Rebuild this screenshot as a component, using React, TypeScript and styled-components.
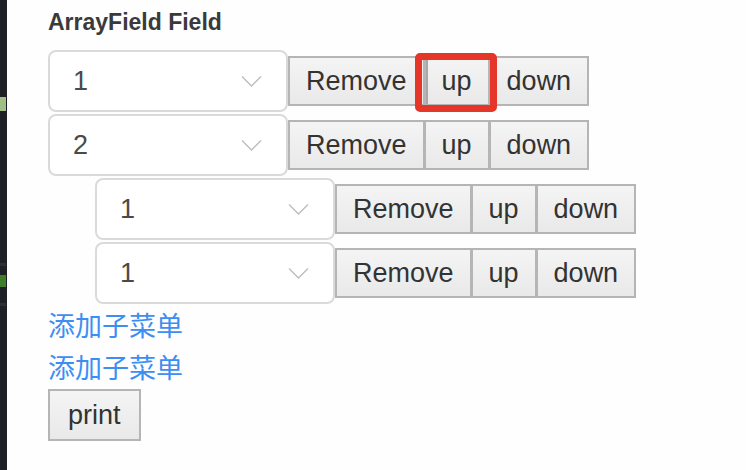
import React from "react";
import styled, { createGlobalStyle } from "styled-components";

const GlobalStyle = createGlobalStyle`
  html, body { margin: 0; padding: 0; background: #ffffff; }
  body { font-family: "Liberation Sans", Arial, sans-serif; }
  * { box-sizing: border-box; }
`;

const Page = styled.div`
  display: flex;
  width: 746px;
  height: 470px;
  overflow: hidden;
  background: #fefefe;
`;

const EditorStrip = styled.div`
  width: 7px;
  flex: none;
  background: #1d2125;
  display: flex;
  flex-direction: column;
`;

const StripMark = styled.div<{ $top: number; $h: number; $color: string }>`
  margin-top: ${(p) => p.$top}px;
  height: ${(p) => p.$h}px;
  width: 6px;
  background: ${(p) => p.$color};
`;

const Main = styled.div`
  flex: 1;
  padding: 7px 0 0 41px;
  display: flex;
  flex-direction: column;
  align-items: flex-start;
`;

const Title = styled.div`
  font-size: 23px;
  line-height: 30px;
  font-weight: bold;
  color: #3a3a3a;
  margin-bottom: 13px;
`;

const List = styled.div`
  display: flex;
  flex-direction: column;
  gap: 2px;
`;

const Row = styled.div<{ $indent: number }>`
  display: flex;
  align-items: center;
  margin-left: ${(p) => p.$indent * 47}px;
`;

const Select = styled.div`
  width: 240px;
  height: 62px;
  border: 2px solid #dadada;
  border-radius: 8px;
  background: #fff;
  display: flex;
  align-items: center;
  justify-content: space-between;
  padding: 0 24px 0 23px;
  font-size: 27px;
  color: #4a4a4a;
`;

const Chevron = () => (
  <svg width="21" height="13" viewBox="0 0 21 13" fill="none">
    <path d="M1 1.5 L10.5 11 L20 1.5" stroke="#bdbdbd" strokeWidth="1.4" />
  </svg>
);

const ButtonGroup = styled.div`
  display: flex;
`;

const Button = styled.button<{ $active?: boolean }>`
  position: relative;
  font-family: "Liberation Sans", Arial, sans-serif;
  font-size: 27px;
  line-height: 46px;
  height: 50px;
  padding: 0 16px;
  margin: 0;
  color: #333;
  border: 2px solid #b5b5b5;
  border-radius: 0;
  background: linear-gradient(#f4f4f4, #e9e9e9);
  box-shadow: ${(p) => (p.$active ? "inset 2px 0 0 #a8a8a8" : "none")};
  & + & {
    border-left-width: 1px;
  }
`;

const Highlight = styled.span`
  position: absolute;
  z-index: 2;
  left: -11px;
  top: -5px;
  right: -9px;
  bottom: -8px;
  border: 7px solid #e5362a;
  border-radius: 5px;
  pointer-events: none;
`;

const Link = styled.a`
  display: block;
  font-family: "Noto Sans CJK SC", sans-serif;
  font-size: 27px;
  line-height: 42px;
  color: #3d8ef4;
  text-decoration: none;
`;

const PrintButton = styled(Button)`
  height: 52px;
  line-height: 48px;
  padding: 0 18px;
  margin-top: 1px;
`;

const rows = [
  { value: "1", indent: 0, highlight: true },
  { value: "2", indent: 0, highlight: false },
  { value: "1", indent: 1, highlight: false },
  { value: "1", indent: 1, highlight: false },
];

export default function App() {
  return (
    <>
      <GlobalStyle />
      <Page>
        <EditorStrip>
          <StripMark $top={97} $h={14} $color="#9fbf86" />
          <StripMark $top={152} $h={3} $color="#2c3035" />
          <StripMark $top={9} $h={12} $color="#3f7d2b" />
          <StripMark $top={16} $h={3} $color="#2c3035" />
        </EditorStrip>
        <Main>
          <Title>ArrayField Field</Title>
          <List>
            {rows.map((r, i) => (
              <Row key={i} $indent={r.indent}>
                <Select>
                  <span>{r.value}</span>
                  <Chevron />
                </Select>
                <ButtonGroup>
                  <Button>Remove</Button>
                  <Button $active={r.highlight}>
                    up
                    {r.highlight && <Highlight />}
                  </Button>
                  <Button>down</Button>
                </ButtonGroup>
              </Row>
            ))}
          </List>
          <Link>添加子菜单</Link>
          <Link>添加子菜单</Link>
          <PrintButton>print</PrintButton>
        </Main>
      </Page>
    </>
  );
}
